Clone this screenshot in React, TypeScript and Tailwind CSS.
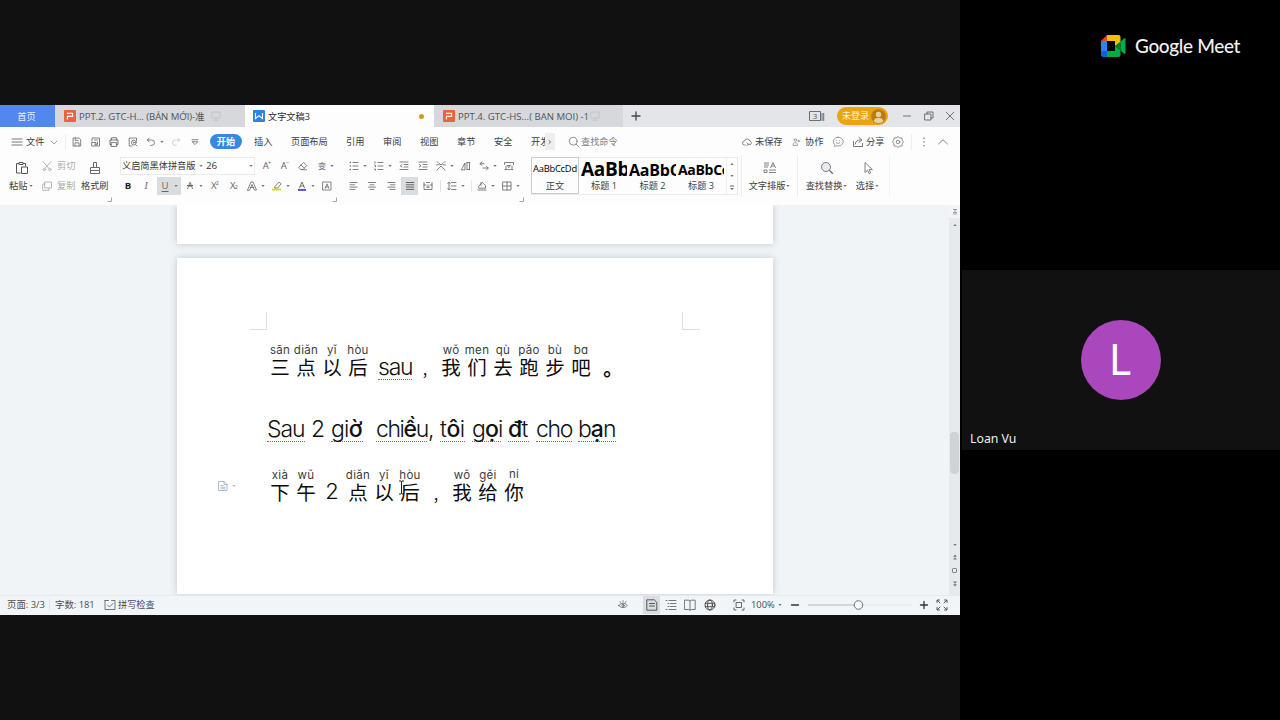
import type { ReactNode } from "react";

const UI = "font-['Open_Sans','Noto_Sans_CJK_SC',sans-serif]";

function Ic({ c = "", children, vb = "0 0 12 12" }: { c?: string; children: ReactNode; vb?: string }) {
  return (
    <svg
      viewBox={vb}
      className={`h-3 w-3 shrink-0 ${c}`}
      fill="none"
      stroke="currentColor"
      strokeWidth="0.8"
      strokeLinecap="round"
      strokeLinejoin="round"
    >
      {children}
    </svg>
  );
}

function Caret({ c = "" }: { c?: string }) {
  return (
    <svg viewBox="0 0 6 6" className={`h-1.5 w-1.5 shrink-0 ${c}`} fill="#777">
      <path d="M1.3 2h3.4L3 4z" />
    </svg>
  );
}

function Tx({ c, children }: { c: string; children: ReactNode }) {
  return <span className={`shrink-0 whitespace-nowrap ${c}`}>{children}</span>;
}

function Corner() {
  return (
    <svg viewBox="0 0 5 5" className="h-[5px] w-[5px]" fill="none" stroke="#a3a7ab" strokeWidth="1">
      <path d="M4.5 0.5v4h-4" />
    </svg>
  );
}

function PptLogo({ c }: { c: string }) {
  return (
    <svg viewBox="0 0 12 12" className={`h-3 w-3 shrink-0 ${c}`}>
      <rect width="12" height="12" rx="1" fill="#e9643c" />
      <path d="M3 3.4h5.6v3H3.4v3" fill="none" stroke="#fff" strokeWidth="1.1" />
    </svg>
  );
}

function Monitor({ c }: { c: string }) {
  return (
    <Ic c={`text-[#bfc2c6] ${c}`}>
      <path d="M2 2h8v6H2zM6 8v2M4 10.3h4" />
    </Ic>
  );
}

function TabBar() {
  return (
    <div className="flex h-[22px] items-stretch bg-[#e3e5e8] text-[9.6px] text-[#50545a]">
      <div className="flex w-[55px] items-center justify-center bg-[#5187ee] pr-[2px] pt-px text-[9.2px] text-[#e6eefd]">首页</div>
      <div className="flex w-[190px] items-center bg-[#d6d8dc]">
        <PptLogo c="ml-[9px]" />
        <Tx c="ml-[3px] w-[128px] pt-[2px] tracking-[-0.07px]">PPT.2. GTC-H... (BẢN MỚI)-准</Tx>
        <Monitor c="ml-[3px]" />
      </div>
      <div className="flex w-[189px] items-center bg-[#fdfdfe]">
        <svg viewBox="0 0 12 12" className="ml-2 h-3 w-3 shrink-0">
          <rect width="12" height="12" rx="1" fill="#3180e4" />
          <path d="M2.5 3v5.5L6 5.6l3.5 2.9V3" fill="none" stroke="#fff" strokeWidth="1.1" />
        </svg>
        <Tx c="ml-[3px] w-[44px] pt-px text-[9.2px] text-[#2a2d31]">文字文稿3</Tx>
        <span className="ml-[107px] h-[5px] w-[5px] rounded-full bg-[#d09a1e]" />
      </div>
      <div className="flex w-[189px] items-center bg-[#d6d8dc]">
        <PptLogo c="ml-[9px]" />
        <Tx c="ml-[3px] w-[132px] pt-[2px]">PPT.4. GTC-HS...( BAN MOI) -1</Tx>
        <Monitor c="-ml-px" />
      </div>
      <Ic c="ml-[7px] mt-[5px] text-[#444]">
        <path d="M6 2v8M2 6h8" strokeWidth="1.3" />
      </Ic>
      <div className="ml-[165px] flex items-center">
        <svg viewBox="0 0 17 12" className="ml-px h-3 w-[17px]" fill="none" stroke="#6b6f74" strokeWidth="1">
          <path d="M1.5 1.5h11v9h-11zM14 3v8M15.7 3v8" />
          <text x="7" y="9" fontSize="8" textAnchor="middle" fill="#555" stroke="none" fontFamily="Open Sans">3</text>
        </svg>
        <div className="ml-[12px] flex h-[18px] w-[51px] items-center rounded-full bg-[#e9a412] text-[9px] text-[#fdf3da]">
          <Tx c="ml-[5px] w-[29px]">未登录</Tx>
          <svg viewBox="0 0 15 15" className="h-[15px] w-[15px]">
            <circle cx="7.5" cy="7.5" r="7.3" fill="#b97a14" />
            <circle cx="7.5" cy="5.4" r="2.7" fill="#e8cf9f" />
            <path d="M2.6 12.3c1-4.6 8.8-4.6 9.8 0a7 7 0 0 1-9.8 0z" fill="#e8cf9f" />
          </svg>
        </div>
        <Ic c="ml-[13px] text-[#555]"><path d="M2.5 6h7" /></Ic>
        <Ic c="ml-[10px] text-[#555]"><path d="M2 4h6v6H2zM4 4V2h6v6H8" /></Ic>
        <Ic c="ml-[9px] text-[#555]"><path d="M2.2 2.2l7.6 7.6M9.8 2.2L2.2 9.8" /></Ic>
      </div>
    </div>
  );
}

function MenuRow() {
  return (
    <div className="flex h-7 items-center pt-px text-[9.2px] text-[#3c3f43]">
      <Ic c="ml-[11px] text-[#555]"><path d="M1 3h10M1 6h10M1 9h10" /></Ic>
      <Tx c="ml-[3px] w-5">文件</Tx>
      <Ic c="ml-[2px] text-[#888]"><path d="M3 5l3 3 3-3" /></Ic>
      <span className="ml-[5px] h-4 w-px bg-[#eceef0]" />
      <Ic c="ml-[5px] text-[#666]"><path d="M2.5 2h5.5l1.7 1.7V10H2.5zM4 10V6.8h4V10M4.2 2v2.400h3" /></Ic>
      <Ic c="ml-[7px] text-[#666]"><path d="M2 5V2h7.500v8H6.500M4.500 4h3M2 6.500h4v3.500H2zM4.500 8.200h3M7.500 6v2.200" /></Ic>
      <Ic c="ml-[6px] text-[#555]"><path d="M3.3 4V1.8h5.4V4M3.3 8.5H2V4h8v4.5H8.7M3.3 6.6h5.4v3.8H3.3z" /></Ic>
      <Ic c="ml-[7px] text-[#666]"><path d="M5 10H2.2V2h7.3v3M9.9 10L8.7 8.7" /><circle cx="6.8" cy="6.6" r="2.4" /><circle cx="6.8" cy="6.6" r=".6" /></Ic>
      <Ic c="ml-[6px] text-[#666]"><path d="M4.3 2L2.3 4l2 2M2.3 4h4.5a2.7 2.7 0 0 1 0 5.4H5.5" /></Ic>
      <Caret c="ml-[2px]" />
      <Ic c="ml-[5px] text-[#c4c7ca]"><path d="M7.7 2l2 2-2 2M9.7 4H5.2a2.7 2.7 0 0 0 0 5.4h1.3" /></Ic>
      <Ic c="ml-[7px] text-[#666]"><path d="M3 3.7h6M3.4 6L6 8.6 8.6 6z" /></Ic>
      <div className="ml-[9px] flex h-[15px] w-8 items-center justify-center rounded-full bg-[#3d86e0] font-bold text-white">开始</div>
      <Tx c="ml-3 w-5">插入</Tx>
      <Tx c="ml-[17px] w-[38px]">页面布局</Tx>
      <Tx c="ml-[17px] w-5">引用</Tx>
      <Tx c="ml-[17px] w-5">审阅</Tx>
      <Tx c="ml-[17px] w-5">视图</Tx>
      <Tx c="ml-[17px] w-5">章节</Tx>
      <Tx c="ml-[17px] w-5">安全</Tx>
      <Tx c="ml-[17px] w-[14px] overflow-hidden">开发</Tx>
      <div className="flex h-[17px] w-[10px] items-center justify-center bg-[#eceeef]">
        <Ic c="text-[#555]"><path d="M5 4.5L6.7 6 5 7.5" /></Ic>
      </div>
      <Ic c="ml-[13px] text-[#777]"><circle cx="5.2" cy="5.2" r="3.9" /><path d="M8 8l3 3" /></Ic>
      <Tx c="ml-px w-[37px] text-[#7c7f83]">查找命令</Tx>
      <Ic c="ml-[123px] text-[#666]"><path d="M4.3 9H3.6a2 2 0 0 1-.2-4 2.8 2.8 0 0 1 5.4 0 2 2 0 0 1 .8 3.500M6 6.8l1.300 1.500L6 9.700M7.200 8.300h2" /></Ic>
      <Tx c="ml-[2px] w-[29px]">未保存</Tx>
      <Ic c="ml-[6px] text-[#888]"><circle cx="5.300" cy="4" r="1.300" /><path d="M3 9c0-3.400 4.400-3.400 4.600 0zM8 5h1.600M8.800 4.200v1.600" /></Ic>
      <Tx c="ml-[3px] w-5">协作</Tx>
      <Ic c="ml-[7px] text-[#888]"><path d="M6 1.200a5 4.400 0 1 1-1.600 8.500L2.800 10.800l-.2-2.200A4.600 4.400 0 0 1 6 1.200z" /><path d="M4.300 4.500v.3M7.700 4.500v.3M4.200 6.600c.8 1.200 2.800 1.200 3.600 0" /></Ic>
      <Ic c="ml-[8px] text-[#555]"><path d="M1.500 5.5v5h9V7.500M3.300 8c.3-3 2-4 4.700-4M7 1.500L10 4 7 6.300" /></Ic>
      <Tx c="ml-[2px] w-5">分享</Tx>
      <Ic c="ml-[6px] text-[#777]"><path d="M6 .6l1.700 1.300 2.300.1.200 2.200L11.500 6l-1.300 1.800-.2 2.200-2.300.1L6 11.400 4.300 10.100 2 10l-.2-2.200L.5 6l1.300-1.800L2 2l2.300-.1z" /><circle cx="6" cy="6" r="1.800" /></Ic>
      <span className="ml-[7px] h-4 w-px bg-[#eceef0]" />
      <Ic c="ml-[6px] text-[#555]"><path d="M6 2.200v.1M6 6v.1M6 9.700v.1" strokeWidth="1.300" /></Ic>
      <Ic c="ml-[7px] text-[#666]"><path d="M1.500 8L6 3.800 10.500 8" /></Ic>
    </div>
  );
}

function ClipboardGroup() {
  return (
    <div className="flex w-[120px] flex-col text-[9.2px] text-[#3c3f43]">
      <div className="flex h-[39px]">
        <div className="flex w-[32px] flex-col pl-[9px]">
          <svg viewBox="0 0 14 14" className="ml-[6px] mt-[6px] h-[14px] w-[14px]" fill="none" stroke="#555" strokeWidth="1">
            <path d="M5.500 12H1.500V2.500H4M8 2.500h2.500v3M4 1.500h4v2H4zM6.500 6h6v6.500h-6z" />
          </svg>
          <div className="mt-[4px] flex h-[14px] items-center"><Tx c="w-[19px]">粘贴</Tx><Caret /></div>
        </div>
        <div className="ml-[9px] flex w-[36px] flex-col text-[#a7aaae]">
          <div className="flex h-[23px] items-center">
            <Ic><path d="M2 1.500l6 7M10 1.500l-6 7" /><circle cx="3.200" cy="9.500" r="1.200" /><circle cx="8.800" cy="9.500" r="1.200" /></Ic>
            <Tx c="ml-[4px]">剪切</Tx>
          </div>
          <div className="flex h-[17px] items-center">
            <Ic><path d="M4 2h6.500v6H4zM4 4H1.700v6.300H8V8" /></Ic>
            <Tx c="ml-[4px]">复制</Tx>
          </div>
        </div>
        <div className="ml-[4px] flex w-[28px] flex-col">
          <svg viewBox="0 0 14 14" className="ml-[7px] mt-[6px] h-[14px] w-[14px]" fill="none" stroke="#666" strokeWidth="1">
            <path d="M5.500 6.500v-5h3v5M2.500 9.500v-3h9v3zM2.500 9.500v3h9v-3" />
          </svg>
          <div className="mt-[4px] flex h-[14px] items-center"><Tx c="">格式刷</Tx></div>
        </div>
      </div>
      <div className="flex h-[8px] items-end justify-end pr-2"><Corner /></div>
    </div>
  );
}

function L({ c = "", children }: { c?: string; children: ReactNode }) {
  return <span className={`flex h-3 w-3 shrink-0 items-center justify-center text-[9.6px] leading-none text-[#666] ${c}`}>{children}</span>;
}

function FontGroup() {
  return (
    <div className="flex w-[217px] flex-col">
      <div className="flex h-[22px] items-center">
        <div className="flex h-[18px] w-[135px] items-center border border-[#e8eaec] bg-white text-[9.2px] text-[#33363a]">
          <Tx c="ml-px w-[74px]">义启简黑体拼音版</Tx>
          <Caret c="ml-[2px]" />
          <span className="ml-px h-full w-px bg-[#e8eaec]" />
          <Tx c="ml-px w-[42px] text-[9.800px]">26</Tx>
          <Caret />
        </div>
        <L c="ml-[6px]">A<sup className="-ml-px text-[6px]">+</sup></L>
        <L c="ml-[6px]">A<sup className="-ml-px text-[6px]">−</sup></L>
        <Ic c="ml-[6px] text-[#666]"><path d="M2 7l4.500-4.500 3.300 3L6 9.500H4zM4 5l3.300 3.200M4.500 9.700h5" /></Ic>
        <L c="ml-[7px]"><span className="text-[8.500px]">变</span></L>
        <Caret c="ml-px" />
      </div>
      <div className="flex h-[17px] items-center">
        <L c="ml-[2px] font-bold !text-[#222]">B</L>
        <L c="ml-[6px] font-['Liberation_Serif',serif] italic">I</L>
        <div className="ml-[5px] flex h-[18px] w-6 items-center bg-[#dadde0]">
          <L c="ml-[2px] underline underline-offset-2">U</L>
          <Caret c="ml-[2px]" />
        </div>
        <L c="ml-[3px] line-through">A</L>
        <Caret c="ml-[2px]" />
        <L c="ml-[5px]">X<sup className="-ml-px text-[6px]">2</sup></L>
        <L c="ml-[7px]">X<sub className="-ml-px text-[6px]">2</sub></L>
        <Ic c="ml-[6px] text-[#666]"><path d="M1.500 10L5 2h2l3.500 8H8.400L6 4.500 3.600 10zM4.200 7.500h3.600" strokeWidth=".8" /></Ic>
        <Caret c="ml-[2px]" />
        <Ic c="ml-[5px] text-[#666]"><rect x="1" y="8.500" width="9" height="2" fill="#d5dc2c" stroke="none" /><path d="M4 6.500l4-4.500 2.200 1.800L6.500 8H4z" /></Ic>
        <Caret c="ml-[2px]" />
        <Ic c="ml-[5px] text-[#555]"><path d="M3.500 8L6 2l2.500 6M4.300 6h3.400" /><rect x="2" y="9.200" width="8" height="1.500" fill="#2a25c9" stroke="none" /></Ic>
        <Caret c="ml-[2px]" />
        <Ic c="ml-[5px] text-[#666]"><path d="M2 2h8v8H2zM4.200 8.300L6 3.800l1.800 4.500M4.800 7h2.400" strokeWidth=".8" /></Ic>
      </div>
      <div className="flex h-[8px] items-end justify-end"><Corner /></div>
    </div>
  );
}

function ParagraphGroup() {
  return (
    <div className="flex w-[187px] flex-col text-[#5d6165]">
      <div className="flex h-[22px] items-center">
        <Ic c="ml-[11px]"><path d="M5 2.500h5M5 6h5M5 9.500h5" /><path d="M2.300 2.500v.1M2.300 6v.1M2.300 9.500v.1" strokeWidth="1.500" /></Ic>
        <Caret c="ml-[2px]" />
        <Ic c="ml-[5px]"><path d="M5 2.500h5M5 6h5M5 9.500h5M2 1.700v1.600M1.500 5.300h1v1.400M1.500 9h1v1.200" /></Ic>
        <Caret c="ml-[2px]" />
        <Ic c="ml-[5px]"><path d="M2 2h8M6 4.500h4M6 7h4M2 9.500h8M4 4.500L2.300 5.800 4 7" /></Ic>
        <Ic c="ml-[7px]"><path d="M2 2h8M6 4.500h4M6 7h4M2 9.500h8M2.300 4.500L4 5.800 2.300 7" /></Ic>
        <Ic c="ml-[6px]"><path d="M2 1.500l1.500 1.500M10 1.500L8.500 3M2 10.200L6 6l4 4.200M1.500 4.800h2.800M7.700 4.800h2.800M4.500 3.500L6 5l1.500-1.500" /></Ic>
        <Caret c="ml-[2px]" />
        <Ic c="ml-[5px]"><path d="M1.500 9.500L5 3v6.500zM7 2.500v7M9.500 2.500v7M7 2.500h2.500M7 9.500h2.500" /></Ic>
        <Ic c="ml-[6px]"><path d="M4 2L2 3.700 4 5.300M2 3.700h4M5 8h5M8.500 6.300L10.300 8 8.500 9.700" /></Ic>
        <Caret c="ml-[2px]" />
        <Ic c="ml-[5px]"><path d="M1.500 4.500v-2h9v2M2 9.500h2M5 9.500h2M8 9.500h2M3 6v3.500M9 6v3.500M4.500 5.500h3L6 7.500z" /></Ic>
      </div>
      <div className="flex h-[17px] items-center">
        <Ic c="ml-[11px]"><path d="M2 2.500h7M2 4.800h4.500M2 7.100h7M2 9.400h5" /></Ic>
        <Ic c="ml-[6px]"><path d="M2.500 2.500h7M4 4.800h4M2.500 7.100h7M4 9.400h4" /></Ic>
        <Ic c="ml-[7px]"><path d="M3 2.500h7M5.500 4.800H10M3 7.100h7M5 9.400h5" /></Ic>
        <div className="ml-[4px] flex h-[18px] w-[17px] items-center justify-center bg-[#dadde0]">
          <Ic c="text-[#444]"><path d="M2.300 2.500h7.400M2.300 4.800h7.400M2.300 7.100h7.400M2.300 9.400h7.400" /></Ic>
        </div>
        <Ic c="ml-[4px]"><path d="M2 2.500v7h8v-7M2 5h2M8 5h2M4.500 2.500h3M4.500 7.200h3M6 5v2" /></Ic>
        <span className="ml-[6px] h-3 w-px bg-[#dfe1e4]" />
        <Ic c="ml-[5px]"><path d="M5.500 2.500H10M5.500 6H10M5.500 9.500H10M3 2.300v7.400M1.800 3.500L3 2.200l1.200 1.300M1.800 8.500L3 9.800l1.200-1.300" /></Ic>
        <Caret c="ml-[2px]" />
        <span className="ml-[5px] h-3 w-px bg-[#e6e8ea]" />
        <Ic c="ml-[4px]"><path d="M3 6l3.200-3.600L9.500 5.500v2.700H3zM1.800 10h8.400M5 2.500v3" /></Ic>
        <Caret c="ml-[2px]" />
        <Ic c="ml-[5px]"><path d="M2 2h8v8H2zM6 2v8M2 6h8" /></Ic>
        <Caret c="ml-[2px]" />
      </div>
      <div className="flex h-[8px] items-end justify-end"><Corner /></div>
    </div>
  );
}

function StyleCard({ c, sample, s, name }: { c: string; sample: string; s: string; name: string }) {
  return (
    <div className={`flex h-[36px] shrink-0 flex-col items-center ${c}`}>
      <div className="flex h-[23px] w-full items-center overflow-hidden">
        <span className={`whitespace-nowrap text-black ${s}`}>{sample}</span>
      </div>
      <span className="text-[9.200px] leading-[9px] text-[#3c3f43]">{name}</span>
    </div>
  );
}

function Tool({ c, label, children }: { c: string; label: string; children: ReactNode }) {
  return (
    <div className={`flex flex-col items-center text-[9.200px] text-[#3c3f43] ${c}`}>
      <svg viewBox="0 0 14 14" className="mt-[6px] h-[14px] w-[14px]" fill="none" stroke="#707478" strokeWidth=".9">
        {children}
      </svg>
      <div className="mt-[4px] flex h-[14px] items-center">
        <Tx c="">{label}</Tx>
        <Caret />
      </div>
    </div>
  );
}

function Ribbon() {
  return (
    <div className="flex h-[50px] items-start">
      <ClipboardGroup />
      <FontGroup />
      <ParagraphGroup />
      <div className="ml-[7px] mt-[2px] flex h-[38px] w-[207px] border border-[#e8eaec]">
        <StyleCard c="-m-px w-[48px] !h-[37px] border border-[#c9ccd0]" sample="AaBbCcDd" s="pl-px text-[9.400px] tracking-[-0.25px]" name="正文" />
        <StyleCard c="ml-[3px] w-[46px]" sample="AaBbC" s="text-[19px] font-bold tracking-[-0.3px]" name="标题 1" />
        <StyleCard c="ml-[2px] w-[47px]" sample="AaBbCc" s="text-[16px] font-bold tracking-[-0.2px]" name="标题 2" />
        <StyleCard c="ml-[2px] w-[46px]" sample="AaBbCc" s="text-[14px] font-bold tracking-[-0.300px]" name="标题 3" />
        <div className="ml-[2px] flex flex-1 flex-col items-center justify-between border-l border-[#eceef0] py-[3px]">
          <Caret c="rotate-180" />
          <Caret />
          <svg viewBox="0 0 6 6" className="h-1.5 w-1.5" fill="#666"><path d="M1 .5h4v.9H1zM1.200 3h3.600L3 5z" /></svg>
        </div>
      </div>
      <span className="ml-[3px] h-[42px] w-px bg-[#eceef0]" />
      <Tool c="ml-[6px] w-[44px]" label="文字排版">
        <path d="M1 2h5M1 4h5M1 6h4M1 9h3v2.500H1zM6 9h7M6 11.500h7M7.500 7L10 1.500 12.500 7M8.500 5h3" />
      </Tool>
      <span className="ml-[5px] h-[42px] w-px bg-[#eceef0]" />
      <Tool c="ml-[7px] w-[44px]" label="查找替换">
        <circle cx="6" cy="6" r="4.500" fill="#e8eaec" />
        <path d="M9.300 9.300l3.500 3.500" strokeWidth="1.400" />
      </Tool>
      <Tool c="ml-[7px] w-[24px]" label="选择">
        <path d="M4 1.500v10l2.500-2.300 1.600 3.500 1.600-.8-1.600-3.300h3.300z" />
      </Tool>
      <span className="ml-[9px] h-[42px] w-px bg-[#f2f3f5]" />
    </div>
  );
}

const HZ = "font-['Noto_Sans_CJK_SC',sans-serif]";
const PY = "font-['Inter',sans-serif]";

function Zi({ p = "", z, w = "w-[26px]", up = "", zc = "" }: { p?: string; z: string; w?: string; up?: string; zc?: string }) {
  return (
    <span className={`flex shrink-0 flex-col items-center whitespace-nowrap ${w}`}>
      <span className={`h-[13px] text-[11.500px] leading-[14px] tracking-[0.3px] text-[#3c3c3c] ${PY} ${up}`}>{p}</span>
      <span className={`h-[24px] text-[19.500px] leading-[21px] text-[#0c0c0c] ${HZ} ${zc}`}>{z}</span>
    </span>
  );
}

function Word({ c, children }: { c: string; children: ReactNode }) {
  return (
    <span
      className={`h-[26px] shrink-0 whitespace-nowrap border-b border-dotted font-['Inter',sans-serif] text-[23px] font-light leading-[27px] text-[#111] ${c}`}
    >
      {children}
    </span>
  );
}

function B({ children }: { children: ReactNode }) {
  return <span className="font-medium">{children}</span>;
}

function DocumentPage() {
  return (
    <div className="h-[336px] w-[596px] bg-white shadow-[0_0_7px_rgba(90,100,110,0.3)]">
      <div className="flex justify-between pl-[73px] pr-[73px] pt-[54px]">
        <span className="h-[18px] w-[17px] border-b border-r border-[#dedede]" />
        <span className="h-[18px] w-[18px] border-b border-l border-[#dedede]" />
      </div>
      <div className="mt-[13px] flex h-[38px] pl-[90px]">
        <Zi p="sān" z="三" />
        <Zi p="diǎn" z="点" />
        <Zi p="yǐ" z="以" />
        <Zi p="hòu" z="后" />
        <Word c="ml-[7px] mt-[11px] w-[34px] border-[#e04848] tracking-[-1.200px]">sau</Word>
        <Zi z="," zc="font-light" />
        <Zi p="wǒ" z="我" />
        <Zi p="men" z="们" />
        <Zi p="qù" z="去" />
        <Zi p="pǎo" z="跑" />
        <Zi p="bù" z="步" />
        <Zi p="bɑ" z="吧" />
        <Zi z="。" w="w-[26px] pl-[12px]" zc="pt-px font-bold" />
      </div>
      <div className="mt-[35px] flex h-[26px] pl-[90px]">
        <Word c="w-[38px] border-[#e04848] tracking-[-1.100px]">Sau</Word>
        <Word c="ml-[6px] w-[14px] border-transparent">2</Word>
        <Word c="ml-[6px] w-[32px] border-[#e04848] tracking-[-0.800px]">gi<B>ờ</B></Word>
        <Word c="ml-[13px] w-[51px] border-[#e04848] tracking-[-1.400px]">chi<B>ề</B>u</Word>
        <Word c="ml-px w-[12px] border-transparent">,</Word>
        <Word c="w-[25px] border-[#e04848] tracking-[-0.500px]">t<B>ô</B>i</Word>
        <Word c="ml-[7px] w-[29px] border-[#e04848] tracking-[-0.900px]">g<B>ọ</B>i</Word>
        <Word c="ml-[7px] w-[21px] border-[#e04848] tracking-[-0.800px]"><B>đ</B>t</Word>
        <Word c="ml-[7px] w-[36px] border-[#e04848] tracking-[-1.300px]">cho</Word>
        <Word c="ml-[6px] w-[38px] border-[#e04848] tracking-[-1px]">b<B>ạ</B>n</Word>
      </div>
      <div className="relative mt-[26px] flex pl-[90px]">
        <Zi p="xià" z="下" />
        <Zi p="wǔ" z="午" />
        <Zi z="2" zc="!font-['Inter',sans-serif] !text-[22px] font-light" />
        <Zi p="diǎn" z="点" />
        <Zi p="yǐ" z="以" />
        <Zi p="hòu" z="后" />
        <Zi z="," zc="font-light" />
        <Zi p="wǒ" z="我" />
        <Zi p="gěi" z="给" />
        <Zi p="ni" z="你" up="-mt-px mb-px" />
        <svg viewBox="0 0 7 15" className="absolute left-[221px] top-[12px] h-[15px] w-[7px]" fill="none" stroke="#222" strokeWidth="1">
          <path d="M1 1h2l.5.7L4 1h2M3.500 1.500v12M1 14h2l.5-.7.5.7h2" />
        </svg>
        <div className="absolute left-[40px] top-[12px] flex items-center">
          <Ic c="text-[#8eabc4]"><path d="M2 1.500h5l3 3V10.500H2zM7 1.500v3h3M4 5.500h2M4 7.200h4M4 8.800h4" /></Ic>
          <Caret c="ml-[2px] opacity-50" />
        </div>
      </div>
    </div>
  );
}

function ScrollBar() {
  return (
    <div className="flex h-full w-[11px] flex-col items-center bg-[#e6eaed] text-[#777]">
      <div className="flex h-[13px] w-full items-center justify-center bg-[#f1f5f8]">
        <svg viewBox="0 0 6 7" className="h-[7px] w-1.5" fill="none" stroke="#888" strokeWidth=".8"><path d="M1 1.500h4M3 1v3M1 4.500h4M1 6h4" /></svg>
      </div>
      <Caret c="mt-[4px] rotate-180" />
      <span className="mt-[204px] h-[42px] w-[9px] rounded-[4px] bg-[#ced3d8]" />
      <Caret c="mt-[68px]" />
      <svg viewBox="0 0 6 6" className="mt-[6px] h-1.5 w-1.5" fill="#777"><path d="M1 2.800h4L3 .5zM1 5.500h4L3 3.200z" /></svg>
      <span className="mt-[8px] h-[5px] w-[5px] rounded-[1px] border border-[#888]" />
      <svg viewBox="0 0 6 6" className="mt-[8px] h-1.5 w-1.5" fill="#777"><path d="M1 .5h4L3 2.800zM1 3.200h4L3 5.500z" /></svg>
    </div>
  );
}

function Workspace() {
  return (
    <div className="flex h-[390px] justify-between overflow-hidden bg-[#f0f4f7]">
      <div className="flex flex-col gap-[14px] pl-[177px]">
        <div className="h-[39px] w-[596px] bg-white shadow-[0_0_7px_rgba(90,100,110,0.3)]" />
        <DocumentPage />
      </div>
      <ScrollBar />
    </div>
  );
}

function StatusBar() {
  return (
    <div className="flex h-[20px] items-center border-t border-[#e6e9ec] bg-[#f1f5f8] pb-px text-[9.400px] text-[#4a4e53]">
      <Tx c="ml-[7px] w-[38px]">页面: 3/3</Tx>
      <span className="ml-[4px] h-3 w-px bg-[#e3e6e9]" />
      <Tx c="ml-[5px] w-[40px]">字数: 181</Tx>
      <Ic c="ml-[9px] text-[#555]"><path d="M1 1.500h3.500M7.500 1.500H11v9H1v-9M3.500 6l2 2 3.500-3.500" /></Ic>
      <Tx c="ml-[2px] w-[38px] text-[9.200px]">拼写检查</Tx>
      <Ic c="ml-[461px] text-[#555]"><path d="M1.800 6.500c2-3 6.400-3 8.400 0-2 2.700-6.400 2.700-8.400 0zM6 1.800v1M3 2.600l.5.8M9 2.600l-.5.8" /><circle cx="6" cy="6.400" r="1.100" /></Ic>
      <div className="ml-[14px] flex h-[18px] w-[17px] items-center justify-center bg-[#dadee2]">
        <Ic c="text-[#333]"><path d="M1.200.8h7L10.800 3.400v7.800H1.200zM3.500 4.500h5M3.500 7h5" /></Ic>
      </div>
      <Ic c="ml-[5px] text-[#555]"><path d="M1 1.500h1M4 1.500h7M3 4.500h1M5.500 4.500H11M3 7.500h1M5.500 7.500H11M1 10.500h1M4 10.500h7" /></Ic>
      <Ic c="ml-[7px] text-[#555]"><path d="M.8 1.200h4L6 2.200l1.200-1h4v9.300H7.500L6 11.300 4.500 10.500H.8zM6 2.200V11" /></Ic>
      <Ic c="ml-[8px] text-[#333]"><circle cx="6" cy="6" r="5" /><ellipse cx="6" cy="6" rx="2.400" ry="5" /><path d="M1.300 4.300h9.400M1.300 7.700h9.400" /></Ic>
      <Ic c="ml-[17px] text-[#444]"><path d="M1 3V1h2M9 1h2v2M11 9v2H9M3 11H1V9M3.500 3.500h5v5h-5z" /></Ic>
      <Tx c="ml-[6px] w-[26px]">100%</Tx>
      <Caret />
      <Ic c="ml-[6px] text-[#333]"><path d="M2.500 6h7" strokeWidth="1.300" /></Ic>
      <svg viewBox="0 0 106 12" className="ml-[6px] h-3 w-[106px]" fill="none">
        <path d="M1 6h50" stroke="#b4b8bc" />
        <path d="M51 6h54" stroke="#e3e7ea" />
        <circle cx="51.500" cy="6" r="4.300" fill="#f8fafc" stroke="#6b7075" />
      </svg>
      <Ic c="ml-[5px] text-[#333]"><path d="M6 2.500v7M2.500 6h7" strokeWidth="1.300" /></Ic>
      <Ic c="ml-[6px] text-[#333]"><path d="M1 3.500V1h2.500M8.500 1H11v2.500M11 8.500V11H8.500M3.500 11H1V8.500M1.500 1.500l2.500 2.500M10.500 1.500L8 4M10.500 10.500L8 8M1.500 10.500L4 8" /></Ic>
    </div>
  );
}

function MeetPanel() {
  return (
    <div className="flex w-[320px] flex-col bg-black">
      <div className="flex h-[270px] items-start pl-[140px] pt-[35px]">
        <svg viewBox="0 0 26 22" className="h-[22px] w-[26px]">
          <path d="M1 6L7 0v6z" fill="#e94235" />
          <path d="M7 0h11.500q2 0 2 2v5.500L15 11V6H7z" fill="#fbbc04" />
          <path d="M1 6h6v10H1z" fill="#2684fc" />
          <path d="M1 16h6v6H3q-2 0-2-2z" fill="#0066da" />
          <path d="M7 16h8v-5l5.500 4v5q0 2-2 2H7z" fill="#00ac47" />
          <path d="M15 11l5.500-4.500v9z" fill="#00832d" />
          <path d="M20.500 6.500L24 3.500q1.500-1 1.500.6v13.800q0 1.600-1.500.6l-3.500-3z" fill="#00ac47" />
        </svg>
        <span className="ml-[9px] whitespace-nowrap font-['Lato',sans-serif] text-[19px] font-medium leading-[22px] tracking-[-0.350px] text-[#f2f2f2]">
          Google Meet
        </span>
      </div>
      <div className="ml-[2px] flex h-[180px] flex-col bg-[#111111]">
        <div className="ml-[119px] mt-[50px] flex h-20 w-20 items-center justify-center rounded-full bg-[#ab47bc] pb-[3px] pr-[2px] font-['Noto_Sans',sans-serif] text-[43px] leading-none text-white">
          L
        </div>
        <span className="ml-2 mt-[31px] font-['Noto_Sans',sans-serif] text-[12.300px] leading-4 text-[#eeeeee]">Loan Vu</span>
      </div>
    </div>
  );
}

export default function App() {
  return (
    <div className="flex h-[720px] w-[1280px] overflow-hidden bg-black">
      <div className="flex w-[960px] flex-col bg-[#111111]">
        <div className={`mt-[105px] flex h-[510px] flex-col overflow-hidden bg-[#fdfdfe] ${UI}`}>
          <TabBar />
          <MenuRow />
          <Ribbon />
          <Workspace />
          <StatusBar />
        </div>
      </div>
      <MeetPanel />
    </div>
  );
}
